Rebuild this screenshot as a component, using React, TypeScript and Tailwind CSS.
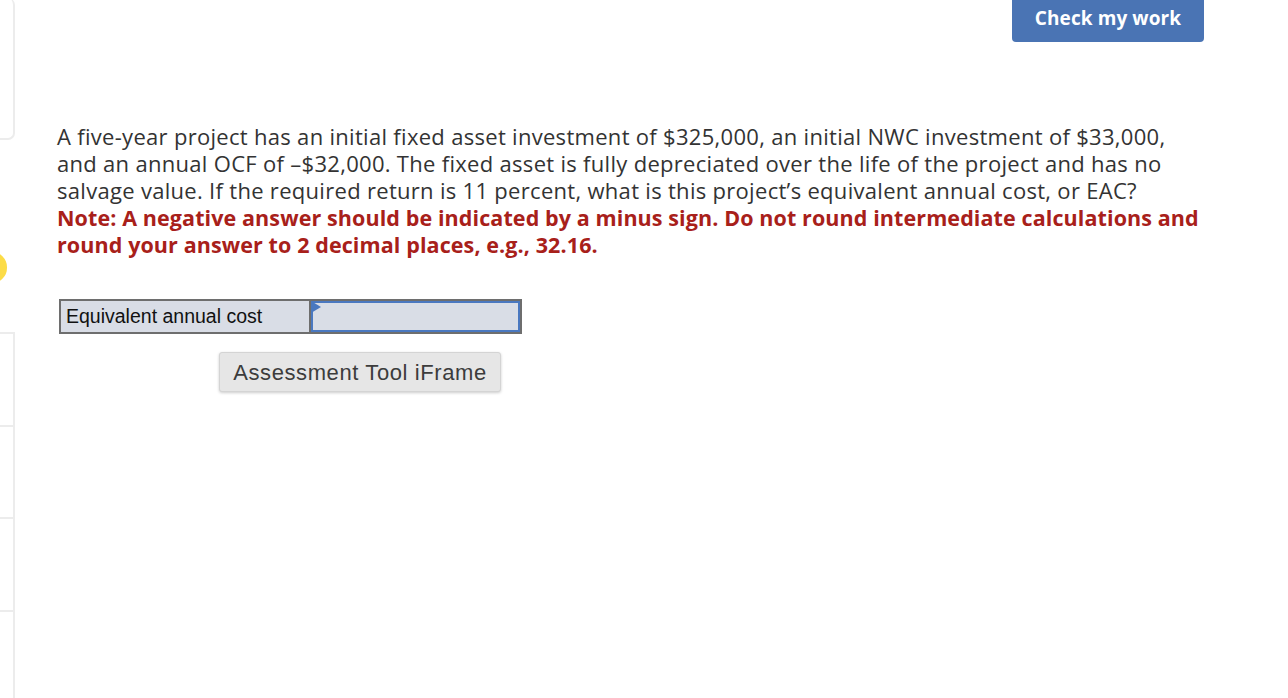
import React from "react";

export default function App() {
  return (
    <div className="w-[1288px] h-[698px] bg-white flex overflow-hidden" style={{ fontFamily: '"Open Sans", "Liberation Sans", sans-serif' }}>
      <div className="w-[15px] shrink-0 flex flex-col">
        <div className="shrink-0 h-[142px] border-r-2 border-b-2 border-[#ececec] rounded-r-[7px] -mt-[2px] -ml-[10px]" />
        <div className="shrink-0 h-[112px]" />
        <div className="shrink-0 w-[30px] h-[31px] rounded-full bg-[#fcdc47] -ml-[23px]" />
        <div className="shrink-0 h-[49px]" />
        <div className="shrink-0 h-[93px] border-r-2 border-t-2 border-[#ececec]" />
        <div className="shrink-0 h-[92px] border-r-2 border-t-2 border-[#ececec]" />
        <div className="shrink-0 h-[93px] border-r-2 border-t-2 border-[#ececec]" />
        <div className="shrink-0 h-[100px] border-r-2 border-t-2 border-[#ececec]" />
      </div>
      <div className="flex-1 flex flex-col pl-[42px]">
        <div className="flex justify-end pr-[84px]">
          <button className="w-[192px] h-[42px] pb-[5px] bg-[#4a74b4] rounded-b-[4px] text-white text-[19px] tracking-[0.1px] font-bold">Check my work</button>
        </div>
        <div className="mt-[81px] text-[22px] leading-[27px] tracking-[0.3px] text-[#333]">
          <div>A five-year project has an initial fixed asset investment of $325,000, an initial NWC investment of $33,000,</div>
          <div>and an annual OCF of –$32,000. The fixed asset is fully depreciated over the life of the project and has no</div>
          <div>salvage value. If the required return is 11 percent, what is this project’s equivalent annual cost, or EAC?</div>
          <div className="font-bold text-[#a8201a] text-[21.5px] tracking-[0.1px]">Note: A negative answer should be indicated by a minus sign. Do not round intermediate calculations and</div>
          <div className="font-bold text-[#a8201a] text-[21.5px] tracking-[0.1px]">round your answer to 2 decimal places, e.g., 32.16.</div>
        </div>
        <div className="mt-[41px] flex ml-[2px] w-[463px] h-[35px]">
          <div className="w-[252px] h-full border-2 border-[#6e6e6e] bg-[#d9dde6] flex items-center pl-[5px] text-[19.5px] text-[#111]" style={{ fontFamily: '"Liberation Sans", Arial, sans-serif' }}>
            Equivalent annual cost
          </div>
          <div className="relative flex-1 h-full border-2 border-[#6e6e6e] border-l-0 bg-[#d9dde6]">
            <div className="absolute inset-0 border-2 border-[#4a78c0]" />
            <div className="absolute left-0 top-0 w-0 h-0 border-t-[6px] border-b-[6px] border-l-[10px] border-t-transparent border-b-transparent border-l-[#4a78c0]" />
          </div>
        </div>
        <div className="mt-[18px] ml-[162px]">
          <button className="w-[282px] h-[40px] bg-[#e6e6e6] border border-[#d4d4d4] rounded-[3px] shadow-[0_1px_3px_rgba(0,0,0,0.2)] text-[22px] text-[#3c3c3c] tracking-[0.6px]" style={{ fontFamily: '"Liberation Sans", Arial, sans-serif' }}>
            Assessment Tool iFrame
          </button>
        </div>
      </div>
    </div>
  );
}
